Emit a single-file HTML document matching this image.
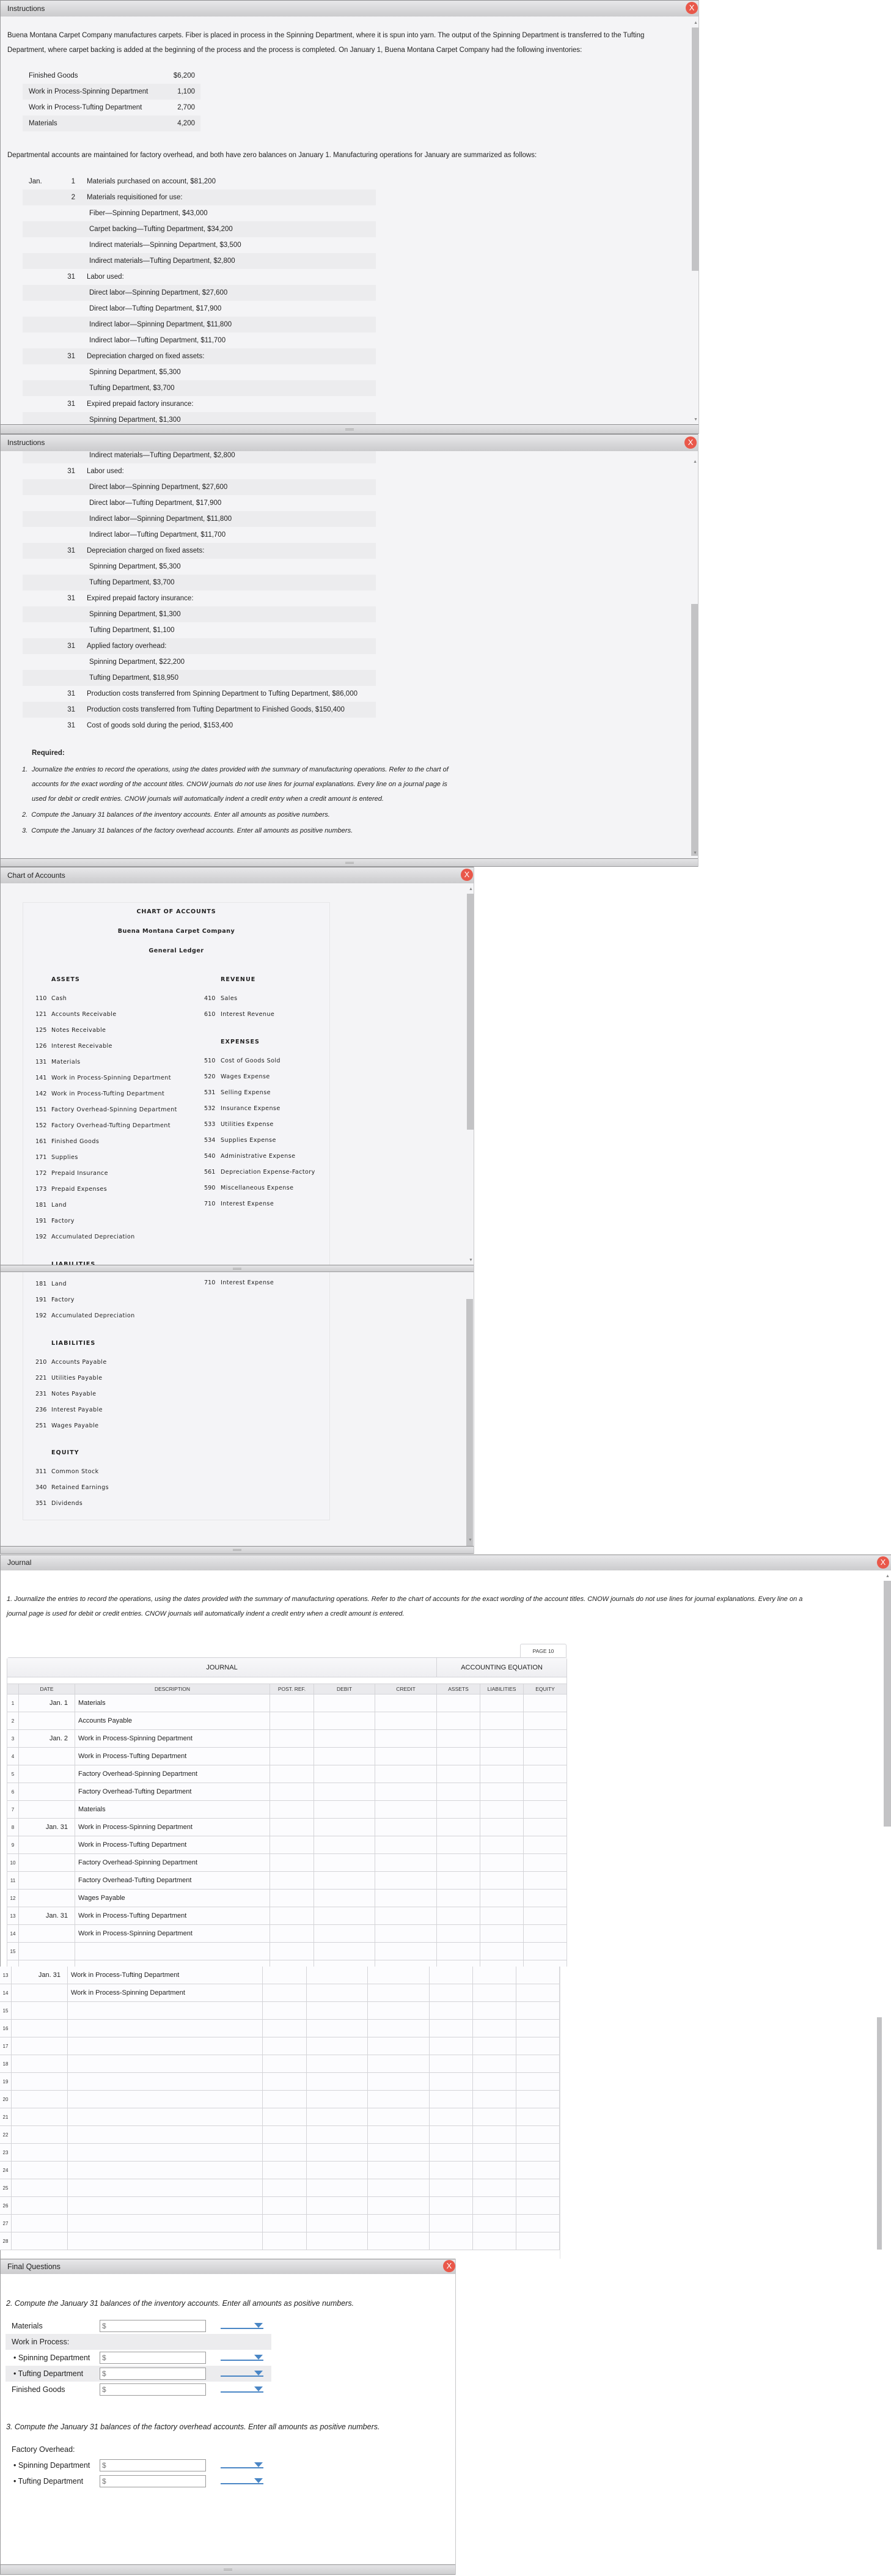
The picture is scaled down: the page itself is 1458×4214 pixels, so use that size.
<!DOCTYPE html>
<html><head><meta charset="utf-8">
<style>
*{box-sizing:border-box}
body{margin:0;width:1458px;height:4214px;background:#fff;position:relative;overflow:hidden;font-family:"Liberation Sans",Arial,sans-serif;color:#222}
.a{position:absolute}
.win{position:absolute;border-left:1px solid #9a9a9c;border-right:1px solid #c8c8ca}
.hdr{position:absolute;left:0;right:0;background:linear-gradient(#e8e8ea,#cbcbcd);border-top:1px solid #8e8e90;font-size:12px;color:#222;padding-left:11px}
.x{position:absolute;width:20px;height:20px;border-radius:50%;background:#e9584a;color:#fff;font-size:13px;text-align:center;line-height:20px;font-family:"Liberation Sans",sans-serif}
.ftr{position:absolute;left:0;right:0;background:linear-gradient(#e4e4e6,#cfcfd1);border-top:1px solid #8e8e90;border-bottom:1px solid #9a9a9c}
.grip{position:absolute;left:50%;top:6px;width:14px;height:3px;border-top:1px solid #aaa;border-bottom:1px solid #aaa;margin-left:-7px}
.clip{position:absolute;overflow:hidden}
.t{position:absolute;white-space:nowrap;line-height:16px;height:16px}
.sb{position:absolute;background:#c3c3c5}
.arr{position:absolute;font-size:7px;color:#888;line-height:8px}
.ins{font-size:11.5px;color:#222}
.lst{position:absolute;left:36px;width:578px}
.lst div{position:relative;height:26px;line-height:26px;font-size:11.5px;white-space:nowrap}
.lst .s{background:#ececee}
.lst .d{position:absolute;left:0;width:86px;text-align:right}
.lst .j{position:absolute;left:10px}
.lst .m{position:absolute;left:105px}
.lst .u{position:absolute;left:109px}
.inv{position:absolute;left:36px;top:111px;width:291px}
.inv div{position:relative;height:26px;line-height:26px;font-size:11.5px}
.inv .s{background:#ececee}
.inv .l{position:absolute;left:10px}
.inv .v{position:absolute;right:9px}
.coa{font-family:"DejaVu Sans",Verdana,sans-serif;font-size:9.6px;color:#222}
.coa .r{position:absolute;white-space:nowrap;line-height:16px}
.coa b{letter-spacing:1px}
table.j{position:absolute;border-collapse:collapse;table-layout:fixed;font-size:11px}
table.j td{border:1px solid #d4d4d8;padding:0;white-space:nowrap;overflow:hidden;background:#fcfcfe}
table.j tr.rw td{height:29px}
table.j td.n{font-size:8px;text-align:center;color:#333}
table.j td.dt{text-align:right;padding-right:11px}
table.j td.ds{padding-left:5px}
table.j tr.ch td{height:17px;background:#eaeaed;font-size:8.5px;text-align:center;color:#333}
.fq{font-size:12.5px;color:#222}
.inp{position:absolute;left:163px;width:174px;height:20px;border:1px solid #9a9a9a;background:#fff;font-size:12px;color:#777;padding-left:3px;line-height:18px}
.dd{position:absolute;left:361px;width:70px;height:10px;border-bottom:2px solid #4a86c5}
.dd:after{content:"";position:absolute;right:1px;top:0;border-left:7px solid transparent;border-right:7px solid transparent;border-top:8px solid #4a86c5}
</style></head><body>

<!-- ===== Instructions window 1 ===== -->
<div class="win" style="left:0;top:0;width:1144px;height:710px;background:#f4f4f6">
  <div class="hdr" style="top:0;height:27px;line-height:26px">Instructions</div>
  <div class="x" style="left:1121px;top:3px">X</div>
  <div class="clip" style="left:0;top:27px;width:1130px;height:667px">
    <div class="a" style="left:0;top:-27px;width:1130px;height:800px">
      <div class="t ins" style="left:11px;top:50px">Buena Montana Carpet Company manufactures carpets. Fiber is placed in process in the Spinning Department, where it is spun into yarn. The output of the Spinning Department is transferred to the Tufting</div>
      <div class="t ins" style="left:11px;top:74px">Department, where carpet backing is added at the beginning of the process and the process is completed. On January 1, Buena Montana Carpet Company had the following inventories:</div>
      <div class="inv">
        <div><span class="l">Finished Goods</span><span class="v">$6,200</span></div>
        <div class="s"><span class="l">Work in Process-Spinning Department</span><span class="v">1,100</span></div>
        <div><span class="l">Work in Process-Tufting Department</span><span class="v">2,700</span></div>
        <div class="s"><span class="l">Materials</span><span class="v">4,200</span></div>
      </div>
      <div class="t ins" style="left:11px;top:246px">Departmental accounts are maintained for factory overhead, and both have zero balances on January 1. Manufacturing operations for January are summarized as follows:</div>
      <div class="lst" style="top:284px">
        <div><span class="j">Jan.</span><span class="d">1</span><span class="m">Materials purchased on account, $81,200</span></div>
        <div class="s"><span class="d">2</span><span class="m">Materials requisitioned for use:</span></div>
        <div><span class="u">Fiber—Spinning Department, $43,000</span></div>
        <div class="s"><span class="u">Carpet backing—Tufting Department, $34,200</span></div>
        <div><span class="u">Indirect materials—Spinning Department, $3,500</span></div>
        <div class="s"><span class="u">Indirect materials—Tufting Department, $2,800</span></div>
        <div><span class="d">31</span><span class="m">Labor used:</span></div>
        <div class="s"><span class="u">Direct labor—Spinning Department, $27,600</span></div>
        <div><span class="u">Direct labor—Tufting Department, $17,900</span></div>
        <div class="s"><span class="u">Indirect labor—Spinning Department, $11,800</span></div>
        <div><span class="u">Indirect labor—Tufting Department, $11,700</span></div>
        <div class="s"><span class="d">31</span><span class="m">Depreciation charged on fixed assets:</span></div>
        <div><span class="u">Spinning Department, $5,300</span></div>
        <div class="s"><span class="u">Tufting Department, $3,700</span></div>
        <div><span class="d">31</span><span class="m">Expired prepaid factory insurance:</span></div>
        <div class="s"><span class="u">Spinning Department, $1,300</span></div>
        <div><span class="u">Tufting Department, $1,100</span></div>
      </div>
    </div>
  </div>
  <div class="sb" style="left:1131px;top:45px;width:11px;height:398px"></div>
  <div class="arr" style="left:1134px;top:34px">▲</div>
  <div class="arr" style="left:1134px;top:683px">▼</div>
  <div class="ftr" style="top:694px;height:16px"><div class="grip"></div></div>
</div>

<!-- ===== Instructions window 2 ===== -->
<div class="win" style="left:0;top:710px;width:1143px;height:708px;background:#f4f4f6">
  <div class="hdr" style="top:0;height:28px;line-height:27px">Instructions</div>
  <div class="x" style="left:1119px;top:4px">X</div>
  <div class="clip" style="left:0;top:28px;width:1128px;height:666px">
    <div class="a" style="left:0;top:-738px;width:1128px;height:1500px">
      <div class="lst" style="top:602px">
        <div><span class="j">Jan.</span><span class="d">1</span><span class="m">Materials purchased on account, $81,200</span></div>
        <div class="s"><span class="d">2</span><span class="m">Materials requisitioned for use:</span></div>
        <div><span class="u">Fiber—Spinning Department, $43,000</span></div>
        <div class="s"><span class="u">Carpet backing—Tufting Department, $34,200</span></div>
        <div><span class="u">Indirect materials—Spinning Department, $3,500</span></div>
        <div class="s"><span class="u">Indirect materials—Tufting Department, $2,800</span></div>
        <div><span class="d">31</span><span class="m">Labor used:</span></div>
        <div class="s"><span class="u">Direct labor—Spinning Department, $27,600</span></div>
        <div><span class="u">Direct labor—Tufting Department, $17,900</span></div>
        <div class="s"><span class="u">Indirect labor—Spinning Department, $11,800</span></div>
        <div><span class="u">Indirect labor—Tufting Department, $11,700</span></div>
        <div class="s"><span class="d">31</span><span class="m">Depreciation charged on fixed assets:</span></div>
        <div><span class="u">Spinning Department, $5,300</span></div>
        <div class="s"><span class="u">Tufting Department, $3,700</span></div>
        <div><span class="d">31</span><span class="m">Expired prepaid factory insurance:</span></div>
        <div class="s"><span class="u">Spinning Department, $1,300</span></div>
        <div><span class="u">Tufting Department, $1,100</span></div>
        <div class="s"><span class="d">31</span><span class="m">Applied factory overhead:</span></div>
        <div><span class="u">Spinning Department, $22,200</span></div>
        <div class="s"><span class="u">Tufting Department, $18,950</span></div>
        <div><span class="d">31</span><span class="m">Production costs transferred from Spinning Department to Tufting Department, $86,000</span></div>
        <div class="s"><span class="d">31</span><span class="m">Production costs transferred from Tufting Department to Finished Goods, $150,400</span></div>
        <div><span class="d">31</span><span class="m">Cost of goods sold during the period, $153,400</span></div>
      </div>
      <div class="t ins" style="left:51px;top:1224px;font-weight:bold">Required:</div>
      <div class="t ins" style="left:35px;top:1251px;font-style:italic;font-size:11px">1.</div>
      <div class="t ins" style="left:51px;top:1251px;font-style:italic;font-size:11px">Journalize the entries to record the operations, using the dates provided with the summary of manufacturing operations. Refer to the chart of</div>
      <div class="t ins" style="left:51px;top:1275px;font-style:italic;font-size:11px">accounts for the exact wording of the account titles. CNOW journals do not use lines for journal explanations. Every line on a journal page is</div>
      <div class="t ins" style="left:51px;top:1299px;font-style:italic;font-size:11px">used for debit or credit entries. CNOW journals will automatically indent a credit entry when a credit amount is entered.</div>
      <div class="t ins" style="left:35px;top:1325px;font-style:italic;font-size:11px">2.&nbsp; Compute the January 31 balances of the inventory accounts. Enter all amounts as positive numbers.</div>
      <div class="t ins" style="left:35px;top:1351px;font-style:italic;font-size:11px">3.&nbsp; Compute the January 31 balances of the factory overhead accounts. Enter all amounts as positive numbers.</div>
    </div>
  </div>
  <div class="sb" style="left:1130px;top:278px;width:11px;height:412px"></div>
  <div class="arr" style="left:1133px;top:42px">▲</div>
  <div class="arr" style="left:1133px;top:682px">▼</div>
  <div class="ftr" style="top:694px;height:14px"><div class="grip" style="top:5px"></div></div>
</div>

<!-- ===== Chart of Accounts ===== -->
<div class="win" style="left:0;top:1418px;width:776px;height:1124px;background:#f4f4f6">
  <div class="hdr" style="top:0;height:27px;line-height:26px">Chart of Accounts</div>
  <div class="x" style="left:753px;top:3px">X</div>
  <!-- region 1 -->
  <div class="clip" style="left:0;top:27px;width:762px;height:624px">
    <div class="a coa" style="left:0;top:-1445px;width:762px;height:3000px">
      <div class="a" style="left:36px;top:1476px;width:503px;height:900px;border:1px solid #e6e6e8;background:#f4f4f7"></div>
      <div class="r" style="left:36px;width:503px;text-align:center;top:1484px;font-weight:bold;letter-spacing:.8px">CHART OF ACCOUNTS</div>
      <div class="r" style="left:36px;width:503px;text-align:center;top:1516px;font-weight:bold;letter-spacing:.5px">Buena Montana Carpet Company</div>
      <div class="r" style="left:36px;width:503px;text-align:center;top:1548px;font-weight:bold;letter-spacing:.5px">General Ledger</div>
      <div class="r" style="left:83px;top:1595px"><b>ASSETS</b></div>
      <div class="r" style="left:57px;top:1621px;line-height:26px">110<br>121<br>125<br>126<br>131<br>141<br>142<br>151<br>152<br>161<br>171<br>172<br>173<br>181<br>191<br>192</div>
      <div class="r" style="left:83px;top:1621px;line-height:26px;letter-spacing:.4px">Cash<br>Accounts Receivable<br>Notes Receivable<br>Interest Receivable<br>Materials<br>Work in Process-Spinning Department<br>Work in Process-Tufting Department<br>Factory Overhead-Spinning Department<br>Factory Overhead-Tufting Department<br>Finished Goods<br>Supplies<br>Prepaid Insurance<br>Prepaid Expenses<br>Land<br>Factory<br>Accumulated Depreciation</div>
      <div class="r" style="left:360px;top:1595px"><b>REVENUE</b></div>
      <div class="r" style="left:333px;top:1621px;line-height:26px">410<br>610</div>
      <div class="r" style="left:360px;top:1621px;line-height:26px;letter-spacing:.4px">Sales<br>Interest Revenue</div>
      <div class="r" style="left:360px;top:1697px"><b>EXPENSES</b></div>
      <div class="r" style="left:333px;top:1723px;line-height:26px">510<br>520<br>531<br>532<br>533<br>534<br>540<br>561<br>590<br>710</div>
      <div class="r" style="left:360px;top:1723px;line-height:26px;letter-spacing:.4px">Cost of Goods Sold<br>Wages Expense<br>Selling Expense<br>Insurance Expense<br>Utilities Expense<br>Supplies Expense<br>Administrative Expense<br>Depreciation Expense-Factory<br>Miscellaneous Expense<br>Interest Expense</div>
      <div class="r" style="left:83px;top:2061px"><b>LIABILITIES</b></div>
      <div class="r" style="left:57px;top:2087px;line-height:26px">210<br>221<br>231<br>236<br>251</div>
      <div class="r" style="left:83px;top:2087px;line-height:26px;letter-spacing:.4px">Accounts Payable<br>Utilities Payable<br>Notes Payable<br>Interest Payable<br>Wages Payable</div>
      <div class="r" style="left:83px;top:2240px"><b>EQUITY</b></div>
      <div class="r" style="left:57px;top:2266px;line-height:26px">311<br>340<br>351</div>
      <div class="r" style="left:83px;top:2266px;line-height:26px;letter-spacing:.4px">Common Stock<br>Retained Earnings<br>Dividends</div>
    </div>
  </div>
  <div class="sb" style="left:763px;top:44px;width:11px;height:386px"></div>
  <div class="arr" style="left:766px;top:33px">▲</div>
  <div class="arr" style="left:766px;top:640px">▼</div>
  <div class="ftr" style="top:651px;height:12px"><div class="grip" style="top:4px"></div></div>
  <!-- region 2 -->
  <div class="clip" style="left:0;top:663px;width:762px;height:448px">
    <div class="a coa" style="left:0;top:-1952px;width:762px;height:3000px">
      <div class="a" style="left:36px;top:1476px;width:503px;height:882px;border:1px solid #e6e6e8;background:#f4f4f7"></div>
      <div class="r" style="left:83px;top:1595px"><b>ASSETS</b></div>
      <div class="r" style="left:57px;top:1621px;line-height:26px">110<br>121<br>125<br>126<br>131<br>141<br>142<br>151<br>152<br>161<br>171<br>172<br>173<br>181<br>191<br>192</div>
      <div class="r" style="left:83px;top:1621px;line-height:26px;letter-spacing:.4px">Cash<br>Accounts Receivable<br>Notes Receivable<br>Interest Receivable<br>Materials<br>Work in Process-Spinning Department<br>Work in Process-Tufting Department<br>Factory Overhead-Spinning Department<br>Factory Overhead-Tufting Department<br>Finished Goods<br>Supplies<br>Prepaid Insurance<br>Prepaid Expenses<br>Land<br>Factory<br>Accumulated Depreciation</div>
      <div class="r" style="left:333px;top:1723px;line-height:26px">510<br>520<br>531<br>532<br>533<br>534<br>540<br>561<br>590<br>710</div>
      <div class="r" style="left:360px;top:1723px;line-height:26px;letter-spacing:.4px">Cost of Goods Sold<br>Wages Expense<br>Selling Expense<br>Insurance Expense<br>Utilities Expense<br>Supplies Expense<br>Administrative Expense<br>Depreciation Expense-Factory<br>Miscellaneous Expense<br>Interest Expense</div>
      <div class="r" style="left:83px;top:2061px"><b>LIABILITIES</b></div>
      <div class="r" style="left:57px;top:2087px;line-height:26px">210<br>221<br>231<br>236<br>251</div>
      <div class="r" style="left:83px;top:2087px;line-height:26px;letter-spacing:.4px">Accounts Payable<br>Utilities Payable<br>Notes Payable<br>Interest Payable<br>Wages Payable</div>
      <div class="r" style="left:83px;top:2240px"><b>EQUITY</b></div>
      <div class="r" style="left:57px;top:2266px;line-height:26px">311<br>340<br>351</div>
      <div class="r" style="left:83px;top:2266px;line-height:26px;letter-spacing:.4px">Common Stock<br>Retained Earnings<br>Dividends</div>
    </div>
  </div>
  <div class="sb" style="left:762px;top:707px;width:11px;height:404px"></div>
  <div class="arr" style="left:765px;top:1098px">▼</div>
  <div class="ftr" style="top:1111px;height:13px"><div class="grip" style="top:4px"></div></div>
</div>

<!-- ===== Journal ===== -->
<div class="win" style="left:0;top:2543px;width:1458px;height:1152px;background:#fff;border-right:none">
  <div class="hdr" style="top:0;height:26px;line-height:25px">Journal</div>
  <div class="x" style="left:1434px;top:3px">X</div>
  <div class="sb" style="left:1445px;top:43px;width:12px;height:402px"></div>
  <div class="arr" style="left:1448px;top:32px">▲</div>
  <div class="sb" style="left:1434px;top:757px;width:8px;height:380px"></div>
</div>
<div class="t" style="left:11px;top:2608px;font-size:11px;font-style:italic">1. Journalize the entries to record the operations, using the dates provided with the summary of manufacturing operations. Refer to the chart of accounts for the exact wording of the account titles. CNOW journals do not use lines for journal explanations. Every line on a</div>
<div class="t" style="left:11px;top:2632px;font-size:11px;font-style:italic">journal page is used for debit or credit entries. CNOW journals will automatically indent a credit entry when a credit amount is entered.</div>
<div class="a" style="left:851px;top:2689px;width:76px;height:24px;border:1px solid #d4d4d8;border-bottom:none;border-radius:3px 3px 0 0;background:#fff;font-size:8.5px;text-align:center;line-height:23px;color:#333">PAGE 10</div>

<div class="clip" style="left:11px;top:2711px;width:917px;height:506px;border-radius:4px 4px 0 0">
<table class="j" style="left:0;top:0;width:916px">
<colgroup><col style="width:19px"><col style="width:92px"><col style="width:319px"><col style="width:72px"><col style="width:100px"><col style="width:101px"><col style="width:71px"><col style="width:71px"><col style="width:71px"></colgroup>
<tr><td colspan="6" style="height:32px;text-align:center;font-size:11px;background:linear-gradient(#f8f8fa,#eeeef1)">JOURNAL</td><td colspan="3" style="text-align:center;font-size:11px;background:linear-gradient(#f8f8fa,#eeeef1)">ACCOUNTING EQUATION</td></tr>
<tr><td colspan="9" style="height:11px;background:#fff"></td></tr>
<tr class="ch"><td></td><td>DATE</td><td>DESCRIPTION</td><td>POST. REF.</td><td>DEBIT</td><td>CREDIT</td><td>ASSETS</td><td>LIABILITIES</td><td>EQUITY</td></tr>
<tr class="rw"><td class="n">1</td><td class="dt">Jan. 1</td><td class="ds">Materials</td><td></td><td></td><td></td><td></td><td></td><td></td></tr>
<tr class="rw"><td class="n">2</td><td class="dt"></td><td class="ds">Accounts Payable</td><td></td><td></td><td></td><td></td><td></td><td></td></tr>
<tr class="rw"><td class="n">3</td><td class="dt">Jan. 2</td><td class="ds">Work in Process-Spinning Department</td><td></td><td></td><td></td><td></td><td></td><td></td></tr>
<tr class="rw"><td class="n">4</td><td class="dt"></td><td class="ds">Work in Process-Tufting Department</td><td></td><td></td><td></td><td></td><td></td><td></td></tr>
<tr class="rw"><td class="n">5</td><td class="dt"></td><td class="ds">Factory Overhead-Spinning Department</td><td></td><td></td><td></td><td></td><td></td><td></td></tr>
<tr class="rw"><td class="n">6</td><td class="dt"></td><td class="ds">Factory Overhead-Tufting Department</td><td></td><td></td><td></td><td></td><td></td><td></td></tr>
<tr class="rw"><td class="n">7</td><td class="dt"></td><td class="ds">Materials</td><td></td><td></td><td></td><td></td><td></td><td></td></tr>
<tr class="rw"><td class="n">8</td><td class="dt">Jan. 31</td><td class="ds">Work in Process-Spinning Department</td><td></td><td></td><td></td><td></td><td></td><td></td></tr>
<tr class="rw"><td class="n">9</td><td class="dt"></td><td class="ds">Work in Process-Tufting Department</td><td></td><td></td><td></td><td></td><td></td><td></td></tr>
<tr class="rw"><td class="n">10</td><td class="dt"></td><td class="ds">Factory Overhead-Spinning Department</td><td></td><td></td><td></td><td></td><td></td><td></td></tr>
<tr class="rw"><td class="n">11</td><td class="dt"></td><td class="ds">Factory Overhead-Tufting Department</td><td></td><td></td><td></td><td></td><td></td><td></td></tr>
<tr class="rw"><td class="n">12</td><td class="dt"></td><td class="ds">Wages Payable</td><td></td><td></td><td></td><td></td><td></td><td></td></tr>
<tr class="rw"><td class="n">13</td><td class="dt">Jan. 31</td><td class="ds">Work in Process-Tufting Department</td><td></td><td></td><td></td><td></td><td></td><td></td></tr>
<tr class="rw"><td class="n">14</td><td class="dt"></td><td class="ds">Work in Process-Spinning Department</td><td></td><td></td><td></td><td></td><td></td><td></td></tr>
<tr class="rw"><td class="n">15</td><td class="dt"></td><td class="ds"></td><td></td><td></td><td></td><td></td><td></td><td></td></tr>
<tr class="rw"><td class="n">16</td><td class="dt"></td><td class="ds"></td><td></td><td></td><td></td><td></td><td></td><td></td></tr>
</table>
</div>

<div class="clip" style="left:0;top:3217px;width:918px;height:465px">
<table class="j" style="left:-1px;top:-1px;width:916px">
<colgroup><col style="width:19px"><col style="width:92px"><col style="width:319px"><col style="width:72px"><col style="width:100px"><col style="width:101px"><col style="width:71px"><col style="width:71px"><col style="width:71px"></colgroup>
<tr class="rw"><td class="n">13</td><td class="dt">Jan. 31</td><td class="ds">Work in Process-Tufting Department</td><td></td><td></td><td></td><td></td><td></td><td></td></tr>
<tr class="rw"><td class="n">14</td><td class="dt"></td><td class="ds">Work in Process-Spinning Department</td><td></td><td></td><td></td><td></td><td></td><td></td></tr>
<tr class="rw"><td class="n">15</td><td></td><td></td><td></td><td></td><td></td><td></td><td></td><td></td></tr>
<tr class="rw"><td class="n">16</td><td></td><td></td><td></td><td></td><td></td><td></td><td></td><td></td></tr>
<tr class="rw"><td class="n">17</td><td></td><td></td><td></td><td></td><td></td><td></td><td></td><td></td></tr>
<tr class="rw"><td class="n">18</td><td></td><td></td><td></td><td></td><td></td><td></td><td></td><td></td></tr>
<tr class="rw"><td class="n">19</td><td></td><td></td><td></td><td></td><td></td><td></td><td></td><td></td></tr>
<tr class="rw"><td class="n">20</td><td></td><td></td><td></td><td></td><td></td><td></td><td></td><td></td></tr>
<tr class="rw"><td class="n">21</td><td></td><td></td><td></td><td></td><td></td><td></td><td></td><td></td></tr>
<tr class="rw"><td class="n">22</td><td></td><td></td><td></td><td></td><td></td><td></td><td></td><td></td></tr>
<tr class="rw"><td class="n">23</td><td></td><td></td><td></td><td></td><td></td><td></td><td></td><td></td></tr>
<tr class="rw"><td class="n">24</td><td></td><td></td><td></td><td></td><td></td><td></td><td></td><td></td></tr>
<tr class="rw"><td class="n">25</td><td></td><td></td><td></td><td></td><td></td><td></td><td></td><td></td></tr>
<tr class="rw"><td class="n">26</td><td></td><td></td><td></td><td></td><td></td><td></td><td></td><td></td></tr>
<tr class="rw"><td class="n">27</td><td></td><td></td><td></td><td></td><td></td><td></td><td></td><td></td></tr>
<tr class="rw"><td class="n">28</td><td></td><td></td><td></td><td></td><td></td><td></td><td></td><td></td></tr>
</table>
</div>
<div class="a" style="left:916px;top:3217px;width:1px;height:478px;background:#e2e2e4"></div>

<!-- ===== Final Questions ===== -->
<div class="win" style="left:0;top:3695px;width:746px;height:517px;background:#fff">
  <div class="hdr" style="top:0;height:25px;line-height:24px;font-size:12.5px">Final Questions</div>
  <div class="x" style="left:724px;top:2px">X</div>
  <div class="ftr" style="top:500px;height:17px"><div class="grip"></div></div>
</div>
<div class="t fq" style="left:10px;top:3760px;font-style:italic">2. Compute the January 31 balances of the inventory accounts. Enter all amounts as positive numbers.</div>
<div class="a" style="left:9px;top:3818px;width:435px;height:26px;background:#ececee"></div>
<div class="a" style="left:9px;top:3870px;width:435px;height:26px;background:#ececee"></div>
<div class="t fq" style="left:19px;top:3797px">Materials</div>
<div class="inp" style="top:3795px">$</div><div class="dd" style="top:3800px"></div>
<div class="t fq" style="left:19px;top:3823px">Work in Process:</div>
<div class="t fq" style="left:22px;top:3849px">• Spinning Department</div>
<div class="inp" style="top:3847px">$</div><div class="dd" style="top:3852px"></div>
<div class="t fq" style="left:22px;top:3875px">• Tufting Department</div>
<div class="inp" style="top:3873px">$</div><div class="dd" style="top:3878px"></div>
<div class="t fq" style="left:19px;top:3901px">Finished Goods</div>
<div class="inp" style="top:3899px">$</div><div class="dd" style="top:3904px"></div>

<div class="t fq" style="left:10px;top:3962px;font-style:italic">3. Compute the January 31 balances of the factory overhead accounts. Enter all amounts as positive numbers.</div>
<div class="t fq" style="left:19px;top:3999px">Factory Overhead:</div>
<div class="t fq" style="left:22px;top:4025px">• Spinning Department</div>
<div class="inp" style="top:4023px">$</div><div class="dd" style="top:4028px"></div>
<div class="t fq" style="left:22px;top:4051px">• Tufting Department</div>
<div class="inp" style="top:4049px">$</div><div class="dd" style="top:4054px"></div>

</body></html>
